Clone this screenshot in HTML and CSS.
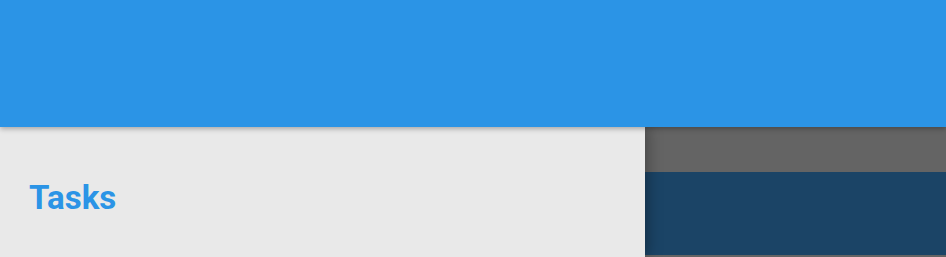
FILE: index.html
```html
<!DOCTYPE html>
<html>
<head>
<meta charset="utf-8">
<link rel="stylesheet" href="styles.css">
</head>
<body>
<header class="app-bar"></header>
<div class="layout">
  <nav class="drawer">
    <h2 class="drawer-title">Tasks</h2>
  </nav>
  <main class="content">
    <div class="strip"></div>
    <div class="bar"></div>
    <div class="rest"></div>
    <div class="scrim"></div>
  </main>
</div>
</body>
</html>
```
FILE: styles.css
```css
html, body {
  margin: 0;
  padding: 0;
  height: 100%;
  overflow: hidden;
  background: #fafafa;
  font-family: Roboto, "Liberation Sans", sans-serif;
}
.app-bar {
  position: relative;
  z-index: 3;
  height: 127px;
  background: #2b94e6;
  box-shadow: 0 2px 5px rgba(0, 0, 0, 0.28);
}
.layout {
  display: flex;
  height: calc(100% - 127px);
}
.drawer {
  position: relative;
  z-index: 2;
  width: 645px;
  flex: none;
  background: #e9e9e9;
  box-shadow: 2px 0 14px rgba(0, 0, 0, 0.35);
  padding: 54px 0 0 29px;
  box-sizing: border-box;
}
.drawer-title {
  margin: 0;
  font-size: 33px;
  line-height: 33px;
  font-weight: 700;
  color: #2b94e6;
}
.content {
  position: relative;
  flex: 1;
  display: flex;
  flex-direction: column;
}
.strip {
  height: 45px;
  background: #fafafa;
}
.bar {
  height: 83px;
  background: #44aaff;
}
.rest {
  flex: 1;
  background: #fafafa;
}
.scrim {
  position: absolute;
  inset: 0;
  background: rgba(0, 0, 0, 0.6);
}
```
